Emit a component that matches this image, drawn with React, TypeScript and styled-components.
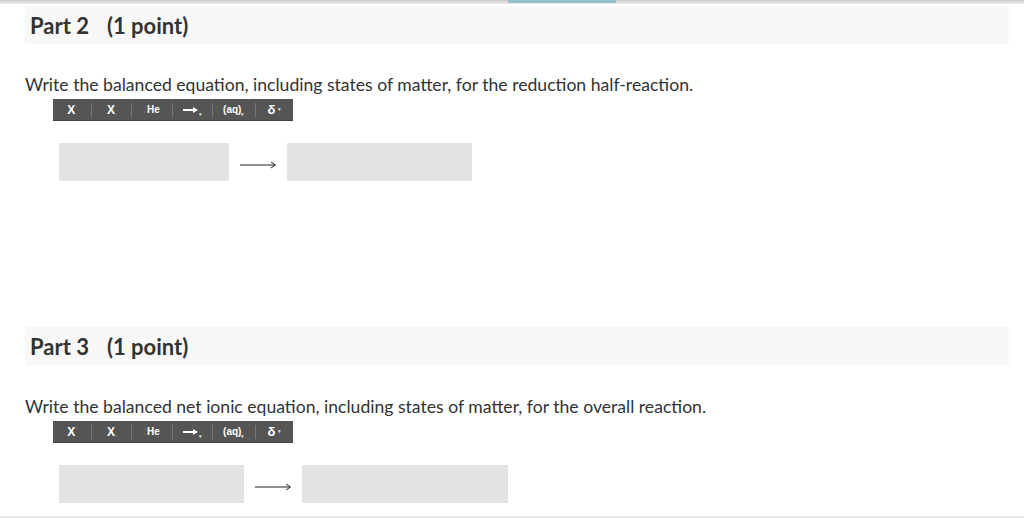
import React from 'react';
import styled, { createGlobalStyle } from 'styled-components';

const GlobalStyle = createGlobalStyle`
  html, body {
    margin: 0;
    padding: 0;
    background: #ffffff;
    font-family: Lato, "Open Sans", sans-serif;
    color: #333333;
  }
`;

const Page = styled.div`
  width: 1024px;
  height: 518px;
  overflow: hidden;
  position: relative;
  background: #fff;
`;

const TopEdge = styled.div`
  height: 4px;
  background: linear-gradient(#c9c9c9, #eeeeee);
  display: flex;
  justify-content: flex-start;
`;

const TabMarker = styled.div`
  margin-left: 508px;
  width: 108px;
  height: 3px;
  background: #93c3c9;
`;

const Content = styled.div`
  padding: 1px 15px 0 25px;
`;

const PartHeader = styled.div<{ $top: number }>`
  background: #f8f8f8;
  height: 38px;
  display: flex;
  align-items: center;
  padding-left: 5px;
  font-size: 22px;
  font-weight: 700;
  color: #333;
  gap: 18px;
  margin-top: ${({ $top }) => $top}px;
`;

const Prompt = styled.div<{ $top: number }>`
  margin-top: ${({ $top }) => $top}px;
  font-size: 17.6px;
  line-height: 20px;
  color: #333;
`;

const Toolbar = styled.div`
  margin: 4px 0 0 28px;
  width: 240px;
  height: 22px;
  background: #555555;
  display: flex;
  align-items: center;
  border-bottom: 1px solid #444;
  box-sizing: border-box;
`;

const ToolBtn = styled.div<{ $w: number; $last?: boolean }>`
  width: ${({ $w }) => $w}px;
  height: 14px;
  display: flex;
  align-items: center;
  justify-content: center;
  color: #fff;
  font-family: "Liberation Sans", Arial, sans-serif;
  font-weight: 700;
  font-size: 12px;
  border-right: ${({ $last }) => ($last ? 'none' : '1px solid #777')};
`;

const Tiny = styled.span`
  font-size: 5px;
  color: #999;
  line-height: 1;
`;

const SmallText = styled.span`
  font-size: 10px;
`;

const Equation = styled.div<{ $top: number }>`
  margin: ${({ $top }) => $top}px 0 0 34px;
  display: flex;
  align-items: center;
`;

const Slot = styled.div<{ $w: number }>`
  width: ${({ $w }) => $w}px;
  height: 38px;
  background: #e3e3e3;
`;

const Yields = styled.div`
  width: 58px;
  display: flex;
  justify-content: center;
  padding-top: 6px;
`;

const BottomLine = styled.div`
  position: absolute;
  left: 0;
  right: 0;
  bottom: 0;
  height: 2px;
  background: #ececec;
`;

const Arrow = () => (
  <svg width="37" height="8" viewBox="0 0 37 8">
    <line x1="0" y1="4" x2="35" y2="4" stroke="#222" strokeWidth="1" />
    <path d="M31 1 L35.5 4 L31 7" fill="none" stroke="#222" strokeWidth="1" />
  </svg>
);

const ToolArrow = () => (
  <svg width="16" height="8" viewBox="0 0 16 8">
    <line x1="0" y1="4" x2="12" y2="4" stroke="#fff" strokeWidth="2" />
    <path d="M10 1 L15 4 L10 7 Z" fill="#fff" />
  </svg>
);

const ChemToolbar = () => (
  <Toolbar>
    <ToolBtn $w={39}>
      X<Tiny style={{ alignSelf: 'flex-start', marginTop: 1 }}>▫</Tiny>
    </ToolBtn>
    <ToolBtn $w={40}>
      X<Tiny style={{ alignSelf: 'flex-end' }}>▫</Tiny>
    </ToolBtn>
    <ToolBtn $w={40}>
      <Tiny style={{ display: 'flex', flexDirection: 'column', marginRight: 1 }}>
        <span>▫</span>
        <span>▫</span>
      </Tiny>
      <SmallText>He</SmallText>
    </ToolBtn>
    <ToolBtn $w={40}>
      <ToolArrow />
      <Tiny style={{ alignSelf: 'flex-end', color: '#ddd' }}>▾</Tiny>
    </ToolBtn>
    <ToolBtn $w={43}>
      <SmallText>(aq)</SmallText>
      <Tiny style={{ alignSelf: 'flex-end', color: '#ddd' }}>▾</Tiny>
    </ToolBtn>
    <ToolBtn $w={38} $last>
      <span style={{ fontSize: 13 }}>δ</span>
      <Tiny style={{ color: '#ddd', marginLeft: 3 }}>▾</Tiny>
    </ToolBtn>
  </Toolbar>
);

export default function App() {
  return (
    <Page>
      <GlobalStyle />
      <TopEdge>
        <TabMarker />
      </TopEdge>
      <Content>
        <PartHeader $top={1}>
          <span>Part 2</span>
          <span>(1 point)</span>
        </PartHeader>
        <Prompt $top={31}>
          Write the balanced equation, including states of matter, for the reduction half-reaction.
        </Prompt>
        <ChemToolbar />
        <Equation $top={22}>
          <Slot $w={170} />
          <Yields>
            <Arrow />
          </Yields>
          <Slot $w={185} />
        </Equation>
        <PartHeader $top={146}>
          <span>Part 3</span>
          <span>(1 point)</span>
        </PartHeader>
        <Prompt $top={32}>
          Write the balanced net ionic equation, including states of matter, for the overall reaction.
        </Prompt>
        <ChemToolbar />
        <Equation $top={22}>
          <Slot $w={185} />
          <Yields>
            <Arrow />
          </Yields>
          <Slot $w={206} />
        </Equation>
      </Content>
      <BottomLine />
    </Page>
  );
}
